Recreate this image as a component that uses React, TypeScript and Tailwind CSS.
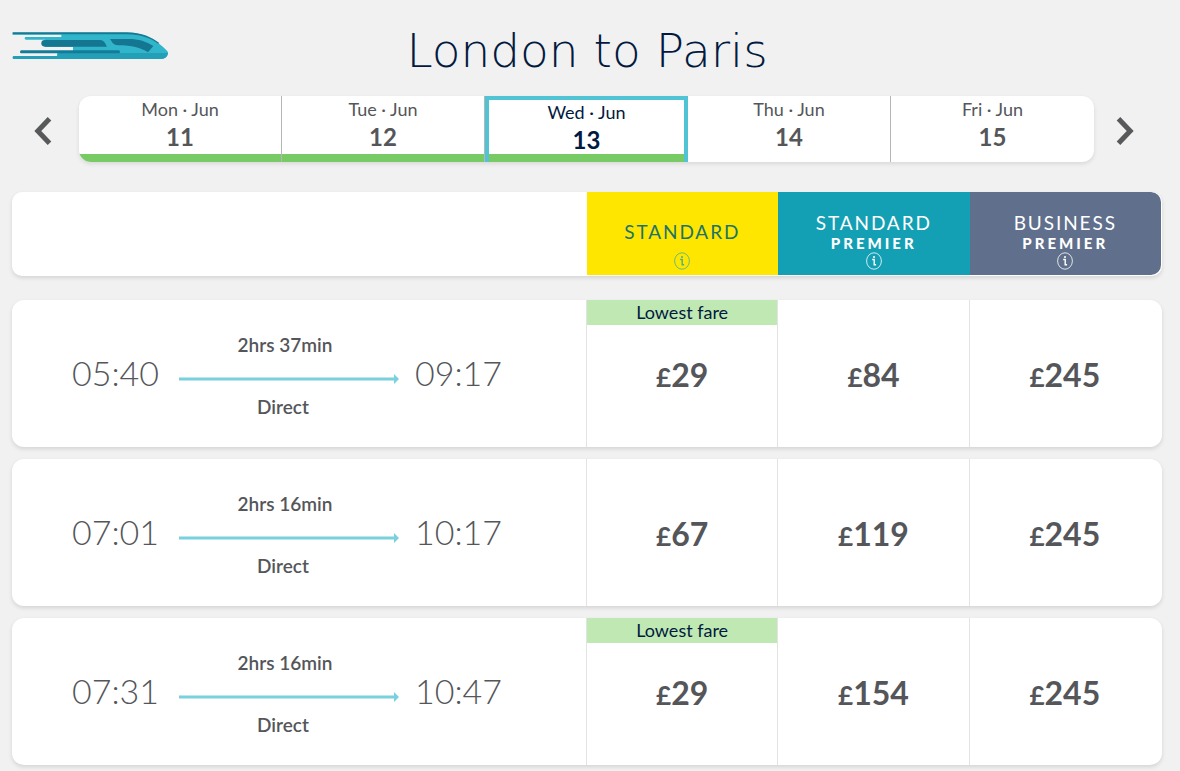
import { useState } from "react";

type Day = { weekday: string; date: number; available: boolean };
type Journey = {
  depart: string;
  arrive: string;
  duration: string;
  fares: number[];
  lowest: boolean;
};

const days: Day[] = [
  { weekday: "Mon", date: 11, available: true },
  { weekday: "Tue", date: 12, available: true },
  { weekday: "Wed", date: 13, available: true },
  { weekday: "Thu", date: 14, available: false },
  { weekday: "Fri", date: 15, available: false },
];

const journeys: Journey[] = [
  { depart: "05:40", arrive: "09:17", duration: "2hrs 37min", fares: [29, 84, 245], lowest: true },
  { depart: "07:01", arrive: "10:17", duration: "2hrs 16min", fares: [67, 119, 245], lowest: false },
  { depart: "07:31", arrive: "10:47", duration: "2hrs 16min", fares: [29, 154, 245], lowest: true },
];

const classes = [
  { top: "STANDARD", bottom: "", style: "bg-[#ffe600] text-[#1c7468]", icon: "text-[#4bae8c]" },
  { top: "STANDARD", bottom: "PREMIER", style: "bg-[#139fb4] text-white", icon: "text-white" },
  { top: "BUSINESS", bottom: "PREMIER", style: "bg-[#60708c] text-white", icon: "text-white" },
];

function TrainLogo() {
  return (
    <svg viewBox="36 36 471 84" className="h-7 w-[157px]" role="img" aria-label="Train">
      <path d="M38 38H380C432 38 468 59 501 92Q506 98 504 101Q501 117 480 117H42Q38 117 38 113Q38 108 42 108H172V101H219V81H135V59H78Q74 59 74 55Q74 51 78 51H184V44H38Z" fill="#31b5ca" />
      <path d="M360 99H504Q501 117 480 117H42Q38 117 38 113Q38 108 42 108H172V99Z" fill="#239fb8" />
      <path d="M38 37H380C426 37 456 53 478 69L475 71C451 55 423 43 380 43H38Z" fill="#147b95" />
      <path d="M134 60H300Q310 60 315 69L321 80H134Q124 80 124 70Q124 60 134 60Z" fill="#147691" />
      <path d="M330 57H385C417 57 439 65 460 78L444 97C421 83 397 76 354 76Q344 76 338 69Z" fill="#147691" />
      <path d="M64 91H356Q360 91 360 96Q360 100 356 100H64Q60 100 60 96Q60 91 64 91Z" fill="#147c96" />
    </svg>
  );
}

function Chevron({ flip = false }: { flip?: boolean }) {
  return (
    <svg viewBox="0 0 18 28" className={flip ? "h-7 w-[18px] rotate-180" : "h-7 w-[18px]"} fill="none" stroke="#58595b" strokeWidth="5" aria-hidden="true">
      <path d="M15.5 1.8 3.8 14l11.7 12.2" />
    </svg>
  );
}

function InfoIcon() {
  return (
    <svg viewBox="0 0 18 18" className="size-[18px]" fill="none" stroke="currentColor" aria-hidden="true">
      <ellipse cx="9" cy="9" rx="7.4" ry="8.2" strokeWidth="0.8" />
      <path d="M7.2 7.5h2v5.3h1.9" strokeWidth="1.4" />
      <circle cx="9" cy="4.9" r="1" fill="currentColor" stroke="none" />
    </svg>
  );
}

function JourneyArrow() {
  return (
    <svg viewBox="0 0 220 10" className="h-[10px] w-full" aria-hidden="true">
      <path d="M0 3.5h215V0l5 5-5 5V6.5H0Z" fill="#78d1dd" />
    </svg>
  );
}

export default function App() {
  const [selected, setSelected] = useState(13);

  return (
    <main className="min-h-screen bg-[#f1f1f1] pr-[18px] pb-1.5 pl-3 font-['Lato',sans-serif] text-[#54565a]">
      <header className="grid h-24 grid-cols-[1fr_auto_1fr] items-center">
        <div className="pb-1">
          <TrainLogo />
        </div>
        <h1 className="pt-1 font-['DejaVu_Sans',sans-serif] text-[47px] leading-none font-extralight text-[#021a3f]">
          London to Paris
        </h1>
      </header>

      <nav aria-label="Travel date" className="grid grid-cols-[67px_1fr_68px] items-stretch">
        <button type="button" aria-label="Earlier dates" className="flex items-center pt-1 pl-[22px]">
          <Chevron />
        </button>
        <div className="grid h-[66px] grid-cols-5 overflow-hidden rounded-xl bg-white shadow-[0_2px_4px_rgba(0,0,0,0.1)]">
          {days.map((day) => {
            const active = day.date === selected;
            return (
              <button
                key={day.date}
                type="button"
                aria-pressed={active}
                onClick={() => setSelected(day.date)}
                className={
                  active
                    ? "flex flex-col items-center border-x-4 border-t-4 border-[#50c3d4] pt-px text-[#021a3f]"
                    : "flex flex-col items-center border-r border-[#b5b6b8] pt-0.5 last:border-r-0"
                }
              >
                <span className="text-lg leading-[22px]">{day.weekday} · Jun</span>
                <span className="mt-[5px] text-2xl leading-6 font-bold">{day.date}</span>
                {day.available && <span className="mt-auto h-2 w-full shrink-0 bg-[#78cb64]" />}
              </button>
            );
          })}
        </div>
        <button type="button" aria-label="Later dates" className="flex items-center pt-1 pl-[22px]">
          <Chevron flip />
        </button>
      </nav>

      <div className="mt-[30px] grid grid-cols-[3fr_1fr_1fr_1fr] overflow-hidden rounded-[10px] bg-white pr-px pb-px shadow-[0_2px_4px_rgba(0,0,0,0.12)]">
        <div />
        {classes.map((c) => (
          <div
            key={c.top + c.bottom}
            className={`flex h-[83px] flex-col items-center justify-end pb-[5px] last:rounded-r-[10px] ${c.style}`}
          >
            <h2 className="flex flex-col items-center text-center">
              <span className="text-[19px] leading-6 tracking-widest">{c.top}</span>
              {c.bottom && <span className="text-[15px] leading-4 font-black tracking-[0.2em]">{c.bottom}</span>}
            </h2>
            <button
              type="button"
              aria-label={`About ${c.top} ${c.bottom}`}
              className={c.bottom ? `mt-px ${c.icon}` : `mt-2 ${c.icon}`}
            >
              <InfoIcon />
            </button>
          </div>
        ))}
      </div>

      <ul className="mt-6 flex flex-col gap-3">
        {journeys.map((j) => (
          <li
            key={j.depart}
            className="grid h-[147px] grid-cols-[3fr_1fr_1fr_1fr] overflow-hidden rounded-xl bg-white pr-0.5 shadow-[0_2px_4px_rgba(0,0,0,0.12)]"
          >
            <div className="flex flex-col items-center pt-[33px] pr-6">
              <div className="flex items-start justify-center">
                <time className="mt-[18px] text-[34px] leading-[44px] font-light">{j.depart}</time>
                <div className="mr-4 ml-5 flex w-[220px] flex-col items-center gap-[17px]">
                  <span className="pr-2 text-[19px] leading-6 font-semibold">{j.duration}</span>
                  <JourneyArrow />
                </div>
                <time className="mt-[18px] text-[34px] leading-[44px] font-light">{j.arrive}</time>
              </div>
              <span className="pr-2 text-[19px] leading-6 font-semibold">Direct</span>
            </div>
            {j.fares.map((fare, i) => (
              <div key={i} className="relative border-l border-[#e3e3e3]">
                {i === 0 && j.lowest && (
                  <span className="absolute inset-x-0 top-0 bg-[#bfe8b3] text-center text-lg leading-[25px] text-[#021a3f]">
                    Lowest fare
                  </span>
                )}
                <button type="button" className="flex size-full items-baseline justify-center pt-[53px] font-bold">
                  <span className="text-[26px] leading-[44px]">£</span>
                  <span className="text-[32px] leading-[44px]">{fare}</span>
                </button>
              </div>
            ))}
          </li>
        ))}
      </ul>
    </main>
  );
}
